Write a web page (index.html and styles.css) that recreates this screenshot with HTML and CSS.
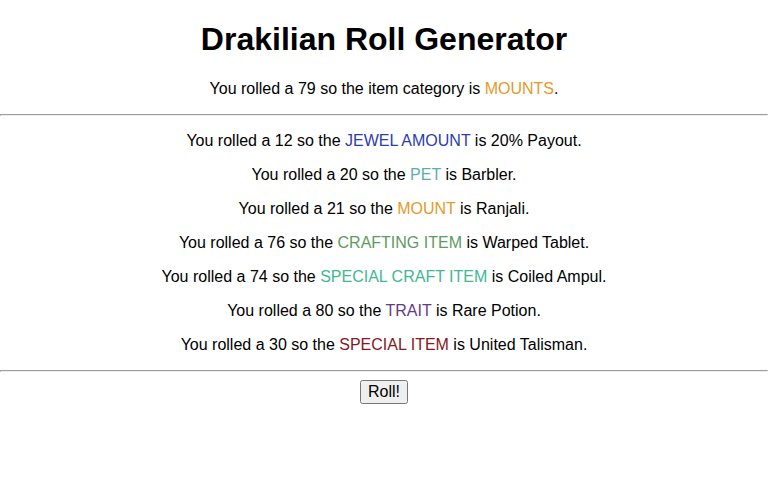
FILE: index.html
```
<!DOCTYPE html>
<html>
  <head>
    <meta charset="utf-8" />
    <title>Drakilian Roll Generator</title>
    <link rel="stylesheet" href="styles.css">
  </head>
  <body>
    <h1>Drakilian Roll Generator</h1>
    <p>You rolled a 79 so the item category is <span class="mounts">MOUNTS</span>.</p>
    <hr />
    <div class="results">
      <p>You rolled a 12 so the <span class="jewel">JEWEL AMOUNT</span> is 20% Payout.</p>
      <p>You rolled a 20 so the <span class="pet">PET</span> is Barbler.</p>
      <p>You rolled a 21 so the <span class="mount">MOUNT</span> is Ranjali.</p>
      <p>You rolled a 76 so the <span class="craft">CRAFTING ITEM</span> is Warped Tablet.</p>
      <p>You rolled a 74 so the <span class="special-craft">SPECIAL CRAFT ITEM</span> is Coiled Ampul.</p>
      <p>You rolled a 80 so the <span class="trait">TRAIT</span> is Rare Potion.</p>
      <p>You rolled a 30 so the <span class="special">SPECIAL ITEM</span> is United Talisman.</p>
    </div>
    <hr />
    <button class="roll">Roll!</button>
  </body>
</html>
```
FILE: styles.css
```
body {
  margin: 0;
  font-family: "Liberation Sans", Arial, sans-serif;
  text-align: center;
  color: #000;
}

h1 {
  font-size: 32px;
  margin: 0.67em 0;
}

p {
  font-size: 16px;
  margin: 16px 0;
}

hr {
  margin: 8px 0;
}

.mounts,
.mount {
  color: #e59a2c;
}

.jewel {
  color: #2b3db4;
}

.pet {
  color: #5aaeb0;
}

.craft {
  color: #5e9a62;
}

.special-craft {
  color: #3fb892;
}

.trait {
  color: #653a86;
}

.special {
  color: #8a1620;
}

.roll {
  font-family: "Liberation Sans", Arial, sans-serif;
  font-size: 16px;
}
```
